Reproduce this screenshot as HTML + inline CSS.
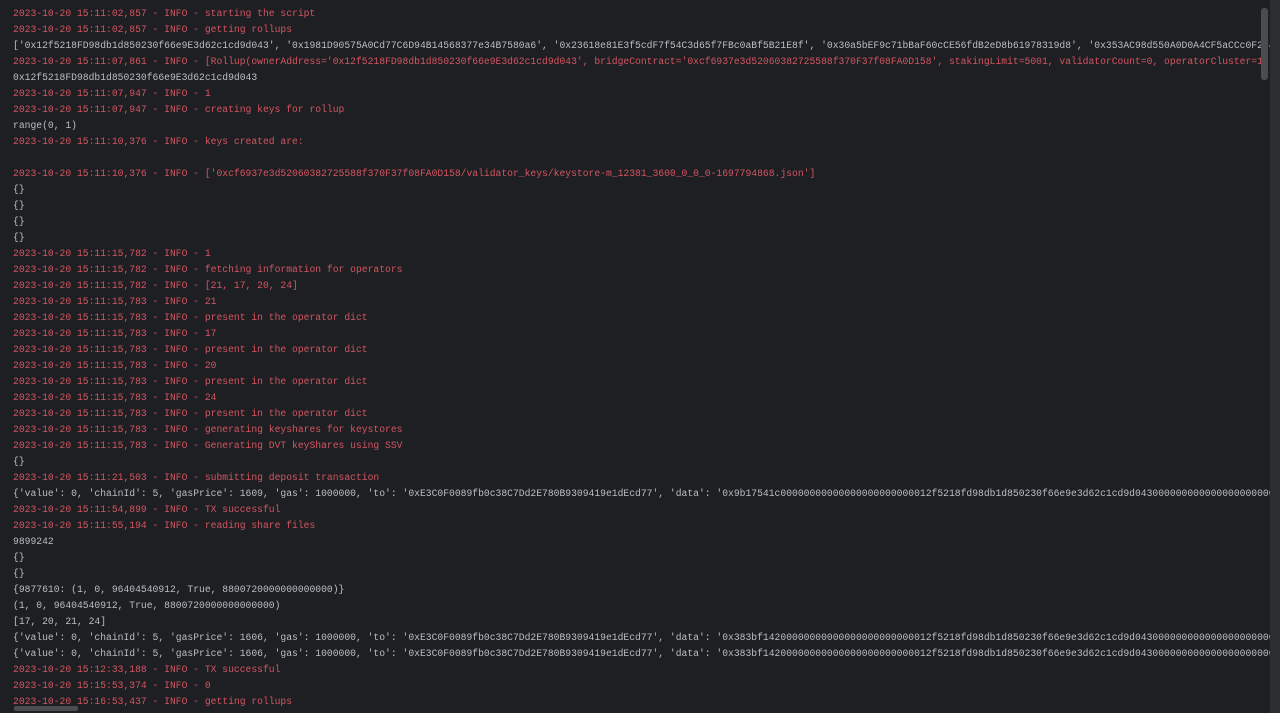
<!DOCTYPE html>
<html><head><meta charset="utf-8"><style>
html,body{margin:0;padding:0;background:#1e1f22;}
body{width:1280px;height:713px;overflow:hidden;position:relative;}
#c{position:absolute;left:0;top:0;width:1270px;height:713px;background:#1e1f22;overflow:hidden;}
#t{position:absolute;left:13px;top:6px;font-family:"Liberation Mono",monospace;font-size:9.7px;line-height:16px;white-space:pre;color:#bcbec4;}
.r{color:#d45562;}
#sb{position:absolute;left:1261px;top:8px;width:7px;height:72px;background:#4a4c50;border-radius:3px;}
#rs{position:absolute;left:1270px;top:0;width:10px;height:713px;background:#2b2d30;}
#hs{position:absolute;left:14px;top:706px;width:64px;height:5px;background:#4a4c50;border-radius:2px;}
</style></head><body>
<div id="c"><div id="t"><span class="r">2023-10-20 15:11:02,857 - INFO - starting the script</span>
<span class="r">2023-10-20 15:11:02,857 - INFO - getting rollups</span>
['0x12f5218FD98db1d850230f66e9E3d62c1cd9d043', '0x1981D90575A0Cd77C6D94B14568377e34B7580a6', '0x23618e81E3f5cdF7f54C3d65f7FBc0aBf5B21E8f', '0x30a5bEF9c71bBaF60cCE56fdB2eD8b61978319d8', '0x353AC98d550A0D0A4CF5aCCc0F2d4
<span class="r">2023-10-20 15:11:07,861 - INFO - [Rollup(ownerAddress='0x12f5218FD98db1d850230f66e9E3d62c1cd9d043', bridgeContract='0xcf6937e3d52060382725588f370F37f08FA0D158', stakingLimit=5001, validatorCount=0, operatorCluster=1</span>
0x12f5218FD98db1d850230f66e9E3d62c1cd9d043
<span class="r">2023-10-20 15:11:07,947 - INFO - 1</span>
<span class="r">2023-10-20 15:11:07,947 - INFO - creating keys for rollup</span>
range(0, 1)
<span class="r">2023-10-20 15:11:10,376 - INFO - keys created are:</span>

<span class="r">2023-10-20 15:11:10,376 - INFO - ['0xcf6937e3d52060382725588f370F37f08FA0D158/validator_keys/keystore-m_12381_3600_0_0_0-1697794868.json']</span>
{}
{}
{}
{}
<span class="r">2023-10-20 15:11:15,782 - INFO - 1</span>
<span class="r">2023-10-20 15:11:15,782 - INFO - fetching information for operators</span>
<span class="r">2023-10-20 15:11:15,782 - INFO - [21, 17, 20, 24]</span>
<span class="r">2023-10-20 15:11:15,783 - INFO - 21</span>
<span class="r">2023-10-20 15:11:15,783 - INFO - present in the operator dict</span>
<span class="r">2023-10-20 15:11:15,783 - INFO - 17</span>
<span class="r">2023-10-20 15:11:15,783 - INFO - present in the operator dict</span>
<span class="r">2023-10-20 15:11:15,783 - INFO - 20</span>
<span class="r">2023-10-20 15:11:15,783 - INFO - present in the operator dict</span>
<span class="r">2023-10-20 15:11:15,783 - INFO - 24</span>
<span class="r">2023-10-20 15:11:15,783 - INFO - present in the operator dict</span>
<span class="r">2023-10-20 15:11:15,783 - INFO - generating keyshares for keystores</span>
<span class="r">2023-10-20 15:11:15,783 - INFO - Generating DVT keyShares using SSV</span>
{}
<span class="r">2023-10-20 15:11:21,503 - INFO - submitting deposit transaction</span>
{'value': 0, 'chainId': 5, 'gasPrice': 1609, 'gas': 1000000, 'to': '0xE3C0F0089fb0c38C7Dd2E780B9309419e1dEcd77', 'data': '0x9b17541c00000000000000000000000012f5218fd98db1d850230f66e9e3d62c1cd9d0430000000000000000000000
<span class="r">2023-10-20 15:11:54,899 - INFO - TX successful</span>
<span class="r">2023-10-20 15:11:55,194 - INFO - reading share files</span>
9899242
{}
{}
{9877610: (1, 0, 96404540912, True, 8800720000000000000)}
(1, 0, 96404540912, True, 8800720000000000000)
[17, 20, 21, 24]
{'value': 0, 'chainId': 5, 'gasPrice': 1606, 'gas': 1000000, 'to': '0xE3C0F0089fb0c38C7Dd2E780B9309419e1dEcd77', 'data': '0x383bf14200000000000000000000000012f5218fd98db1d850230f66e9e3d62c1cd9d0430000000000000000000000
{'value': 0, 'chainId': 5, 'gasPrice': 1606, 'gas': 1000000, 'to': '0xE3C0F0089fb0c38C7Dd2E780B9309419e1dEcd77', 'data': '0x383bf14200000000000000000000000012f5218fd98db1d850230f66e9e3d62c1cd9d0430000000000000000000000
<span class="r">2023-10-20 15:12:33,188 - INFO - TX successful</span>
<span class="r">2023-10-20 15:15:53,374 - INFO - 0</span>
<span class="r">2023-10-20 15:16:53,437 - INFO - getting rollups</span></div>
<div id="sb"></div><div id="hs"></div></div>
<div id="rs"></div>
</body></html>
